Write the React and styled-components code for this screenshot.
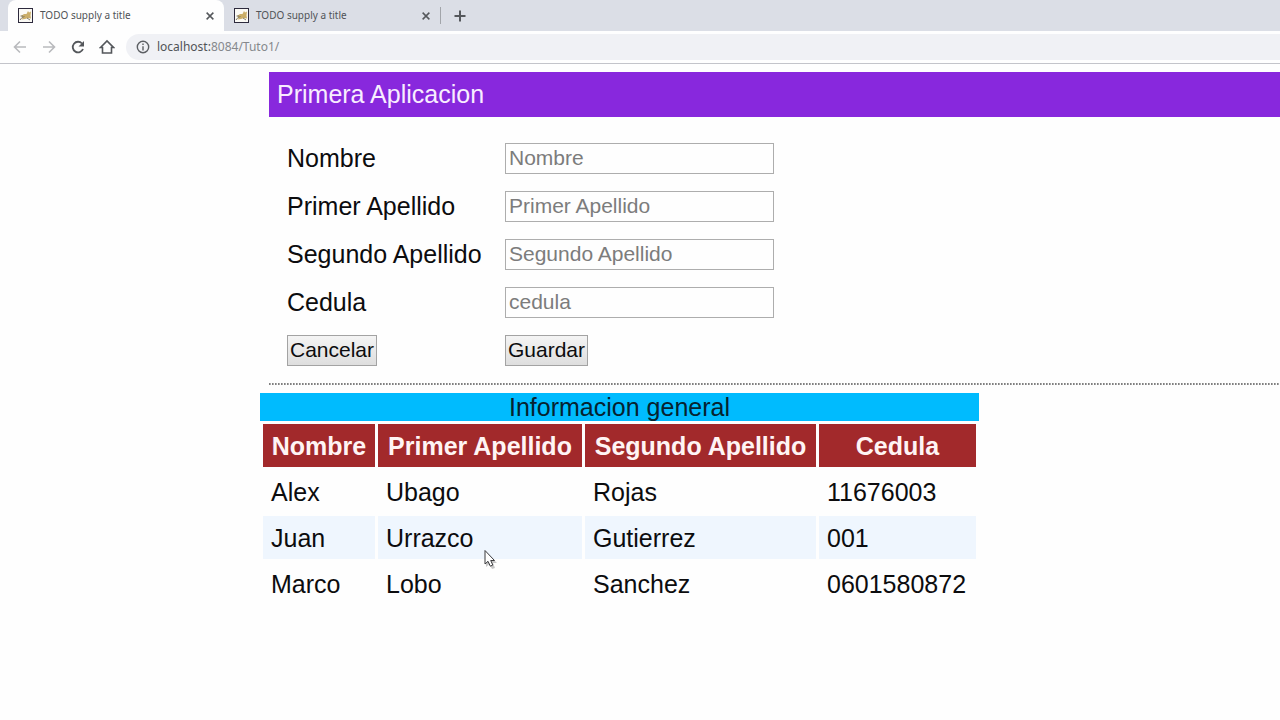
import React from "react";
import styled, { createGlobalStyle } from "styled-components";

const GlobalStyle = createGlobalStyle`
  * { box-sizing: border-box; }
  body {
    margin: 0;
    background: #fefefe;
    color: #0c0c0e;
    font-family: "Liberation Sans", Arial, sans-serif;
    font-size: 25px;
    line-height: 28px;
    overflow-x: hidden;
  }
`;

const Chrome = styled.header`
  font-family: "Noto Sans", "Open Sans", sans-serif;
  background: #fefefe;
  border-bottom: 1px solid #c3c4ca;
`;

const TabStrip = styled.div`
  display: flex;
  align-items: center;
  height: 31px;
  background: #dbdee6;
`;

const StripStart = styled.div`
  align-self: stretch;
  width: 8px;
  background: #dbdee6;
  border-bottom-right-radius: 8px;
`;

const Tab = styled.div`
  display: flex;
  align-items: center;
  align-self: stretch;
  width: 216px;
  padding: 0 8px 0 10px;
  border-radius: 8px 8px 0 0;
  background: ${(p) => (p.$active ? "#fefefe" : "transparent")};
`;

const TabTitle = styled.span`
  flex: 1;
  margin-left: 7px;
  padding-bottom: 2px;
  font-size: 10px;
  line-height: 16px;
  color: #505357;
`;

const IconButton = styled.button`
  display: flex;
  align-items: center;
  justify-content: center;
  width: ${(p) => p.$size}px;
  height: ${(p) => p.$size}px;
  padding: 0;
  border: 0;
  background: none;
  color: ${(p) => (p.$muted ? "#b9babd" : "#54575b")};
`;

const Divider = styled.span`
  width: 1px;
  height: 17px;
  margin-right: 9px;
  background: #a2a5aa;
`;

const Toolbar = styled.div`
  display: flex;
  align-items: center;
  gap: 9px;
  height: 32px;
  padding-left: 10px;
`;

const AddressBar = styled.div`
  display: flex;
  flex: 1;
  align-items: center;
  gap: 7px;
  height: 26px;
  padding-left: 10px;
  border-radius: 13px 0 0 13px;
  background: #f0f1f5;
  color: #5c5f63;
`;

const Address = styled.a`
  font-size: 12px;
  line-height: 18px;
  color: #505357;
  text-decoration: none;
`;

const AddressRest = styled.span`
  color: #85888c;
`;

const Page = styled.main`
  padding: 8px 0 48px 260px;
`;

const FormPanel = styled.section`
  margin-left: 9px;
`;

const Title = styled.h1`
  margin: 0;
  padding: 7px 8px;
  background: #8828dd;
  color: #f8edff;
  font-size: 25px;
  font-weight: 400;
  line-height: 31px;
`;

const Form = styled.form`
  display: grid;
  grid-template-columns: 200px 269px;
  grid-auto-rows: 31px;
  align-items: center;
  gap: 17px 18px;
  padding: 26px 18px 17px;
`;

const Label = styled.label`
  padding-bottom: 2px;
  white-space: nowrap;
`;

const TextBox = styled.input`
  width: 100%;
  height: 31px;
  padding: 0 3px 2px;
  border: 1px solid #adadad;
  background: #fefefe;
  font: inherit;
  font-size: 21px;
  &::placeholder { color: #7c7c7c; opacity: 1; }
`;

const FormButton = styled.button`
  justify-self: start;
  height: 31px;
  padding: 0 2px 2px;
  border: 1px solid #a3a3a3;
  background: linear-gradient(#f4f4f4, #dedede);
  color: #0c0c0e;
  font: inherit;
  font-size: 21px;
  line-height: 26px;
`;

const DottedRule = styled.hr`
  height: 2px;
  margin: 0;
  border: 0;
  background: repeating-linear-gradient(to right, #808080 0 1px, #adadad 1px 2px, #fefefe 2px 3px);
`;

const Table = styled.table`
  width: 719px;
  margin-top: 8px;
  table-layout: fixed;
  border-collapse: separate;
  border-spacing: 3px;
`;

const Caption = styled.caption`
  height: 28px;
  background: #00bbfe;
  color: #06222f;
`;

const Column = styled.col`
  width: ${(p) => p.$width}px;
`;

const HeadCell = styled.th`
  height: 43px;
  padding: 0;
  background: #a2292b;
  color: #fff4f4;
  white-space: nowrap;
`;

const Cell = styled.td`
  height: 43px;
  padding: 0 8px;
  background: ${(p) => (p.$shaded ? "#eff6fe" : "transparent")};
`;

const Pointer = styled.svg`
  position: absolute;
  left: 484px;
  top: 549px;
`;

function CatIcon() {
  return (
    <svg width="15" height="15" viewBox="0 0 15 15" aria-hidden="true">
      <rect x="0.5" y="0.5" width="14" height="14" fill="#fbfaf5" stroke="#2d2a3d" />
      <path d="M3 8 L6 6 L8.500 6 L10 3 L11 4.500 L13 3.500 L12.500 7.500 L13 10.500 L10 10 L7 11 L3.500 11.500 L5 9.500 Z" fill="#cbae68" />
      <path d="M2 12 L4 9.500 L6.500 8.500 M9 10 L12 12 M2.500 8 L5 8" fill="none" stroke="#77705a" strokeWidth="0.9" />
    </svg>
  );
}

function Glyph({ size, children, width = 2 }) {
  return (
    <svg width={size} height={size} viewBox="0 0 16 16" fill="none" stroke="currentColor" strokeWidth={width} aria-hidden="true">
      {children}
    </svg>
  );
}

function BrowserTab({ active }) {
  return (
    <Tab $active={active}>
      <CatIcon />
      <TabTitle>TODO supply a title</TabTitle>
      <IconButton $size={12} aria-label="Close tab">
        <Glyph size={12}><path d="M3.500 3.500 L12.500 12.500 M12.500 3.500 L3.500 12.500" /></Glyph>
      </IconButton>
    </Tab>
  );
}

const fields = [
  ["nombre", "Nombre", "Nombre"],
  ["apellido1", "Primer Apellido", "Primer Apellido"],
  ["apellido2", "Segundo Apellido", "Segundo Apellido"],
  ["cedula", "Cedula", "cedula"],
];

const columns = [
  ["Nombre", 112],
  ["Primer Apellido", 204],
  ["Segundo Apellido", 231],
  ["Cedula", 157],
];

const people = [
  ["Alex", "Ubago", "Rojas", "11676003"],
  ["Juan", "Urrazco", "Gutierrez", "001"],
  ["Marco", "Lobo", "Sanchez", "0601580872"],
];

export default function App() {
  return (
    <>
      <GlobalStyle />
      <Chrome>
        <TabStrip>
          <StripStart />
          <BrowserTab active />
          <BrowserTab />
          <Divider />
          <IconButton $size={20} aria-label="New tab">
            <Glyph size={16}><path d="M8 2.500 V13.500 M2.500 8 H13.500" /></Glyph>
          </IconButton>
        </TabStrip>
        <Toolbar>
          <IconButton $size={20} $muted aria-label="Back">
            <Glyph size={16} width={1.6}><path d="M14 8 H3 M8 2.500 L2.500 8 L8 13.500" /></Glyph>
          </IconButton>
          <IconButton $size={20} $muted aria-label="Forward">
            <Glyph size={16} width={1.6}><path d="M2 8 H13 M8 2.500 L13.500 8 L8 13.500" /></Glyph>
          </IconButton>
          <IconButton $size={20} aria-label="Reload">
            <Glyph size={16} width={1.8}>
              <path d="M13 10 A5.300 5.300 0 1 1 12 4.500" />
              <path d="M14 2 V7.500 H8.500 Z" fill="currentColor" stroke="none" />
            </Glyph>
          </IconButton>
          <IconButton $size={20} aria-label="Home">
            <Glyph size={16} width={1.6}><path d="M1.500 8.500 L8 2 L14.500 8.500 H12.500 V14 H3.500 V8.500 Z" /></Glyph>
          </IconButton>
          <AddressBar>
            <Glyph size={14} width={1.6}>
              <circle cx="8" cy="8" r="6.500" />
              <path d="M8 7 V12 M8 4 V5.800" />
            </Glyph>
            <Address href="#">localhost:<AddressRest>8084/Tuto1/</AddressRest></Address>
          </AddressBar>
        </Toolbar>
      </Chrome>
      <Page>
        <FormPanel>
          <Title>Primera Aplicacion</Title>
          <Form>
            {fields.map(([id, label, hint]) => (
              <React.Fragment key={id}>
                <Label htmlFor={id}>{label}</Label>
                <TextBox id={id} type="text" placeholder={hint} />
              </React.Fragment>
            ))}
            <FormButton type="reset">Cancelar</FormButton>
            <FormButton type="button">Guardar</FormButton>
          </Form>
          <DottedRule />
        </FormPanel>
        <Table>
          <Caption>Informacion general</Caption>
          <colgroup>
            {columns.map(([name, width]) => <Column key={name} $width={width} />)}
          </colgroup>
          <thead>
            <tr>{columns.map(([name]) => <HeadCell key={name} scope="col">{name}</HeadCell>)}</tr>
          </thead>
          <tbody>
            {people.map((person, i) => (
              <tr key={person[0]}>
                {person.map((value) => <Cell key={value} $shaded={i % 2 === 1}>{value}</Cell>)}
              </tr>
            ))}
          </tbody>
        </Table>
      </Page>
      <Pointer width="13" height="21" viewBox="0 0 13 21" aria-hidden="true">
        <path d="M2 3 V18 L5.500 15 L8 20 L11 19 L9 14 H13 Z" fill="#000" opacity="0.22" />
        <path d="M1 1.500 V15 L4 12.300 L6.300 17.200 L8.800 16 L6.700 11.500 H10.500 Z" fill="#fff" stroke="#3a3a3d" strokeWidth="1" />
      </Pointer>
    </>
  );
}
